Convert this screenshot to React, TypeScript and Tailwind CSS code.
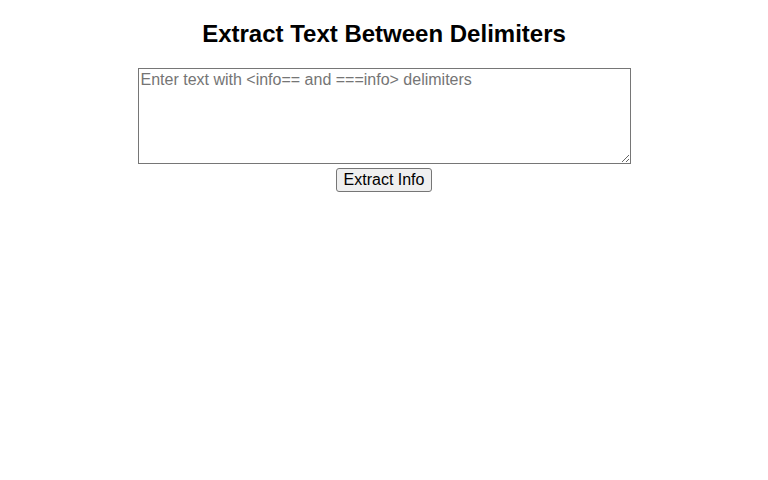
import { useState } from "react"

export default function App() {
	const [text, setText] = useState("")
	const [results, setResults] = useState<string[]>([])

	const handleExtract = () => {
		const matches = [...text.matchAll(/<info==([\s\S]*?)===info>/g)].map((m) => m[1])
		setResults(matches)
	}

	return (
		<div className="min-h-screen bg-white font-['Liberation_Sans',Arial,sans-serif] text-black">
			<h2 className="my-[19.92px] text-center text-[24px] leading-[normal] font-bold">Extract Text Between Delimiters</h2>

			<div className="flex flex-col items-center gap-[4px]">
				<textarea
					className="h-[96px] w-[493px] border border-[#767676] bg-white p-[2px] text-[16px] leading-[normal] placeholder:text-[#757575]"
					placeholder="Enter text with <info== and ===info> delimiters"
					value={text}
					onChange={(e) => setText(e.target.value)}
				/>
				<button
					className="h-[24px] w-[96px] rounded-[3px] border border-[#767676] bg-[#efefef] px-[6px] text-[16px] leading-[normal] text-black"
					onClick={handleExtract}
				>
					Extract Info
				</button>

				{results.length > 0 && (
					<ul className="mt-2 text-[16px]">
						{results.map((r, i) => (
							<li key={i}>{r}</li>
						))}
					</ul>
				)}
			</div>
		</div>
	)
}
